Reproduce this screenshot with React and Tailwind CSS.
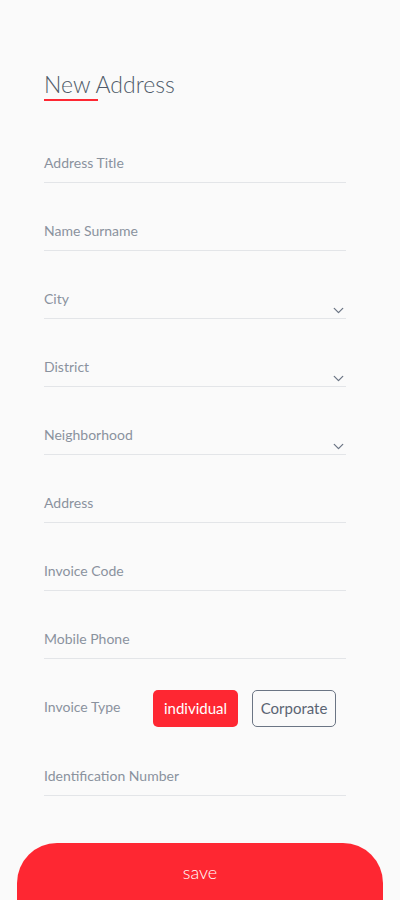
import React from 'react'
import { ChevronDown } from 'lucide-react'

const fields = [
    { label: 'Address Title' },
    { label: 'Name Surname' },
    { label: 'City', select: true },
    { label: 'District', select: true },
    { label: 'Neighborhood', select: true },
    { label: 'Address' },
    { label: 'Invoice Code' },
    { label: 'Mobile Phone' },
]

const Field = ({ label, select }) => (
    <div className='pt-[38px]'>
        <div className='flex justify-between items-end h-[20px]'>
            <span className='text-[14px] leading-[20px] text-[#8a929e]'>{label}</span>
            {select && <ChevronDown size={17} strokeWidth={1.8} className='text-[#6b7584] translate-y-[10px] mr-[-1px]' />}
        </div>
        <div className='mt-[9px] h-[1px] bg-[#e3e5e8]' />
    </div>
)

const App = () => {
    return (
        <div className='w-[400px] h-[900px] bg-[#fafafa] overflow-hidden flex flex-col' style={{ fontFamily: 'Lato, "Noto Sans", sans-serif' }}>
            <div className='pl-[44px] pr-[54px]'>
                <div className='pt-[70px]'>
                    <h1 className='text-[23px] leading-[28px] font-light text-[#4f5a69]'>New Address</h1>
                    <div className='mt-[1px] h-[2px] w-[54px] bg-[#fe2732]' />
                </div>
                <div className='mt-[14px]'>
                    {fields.map((f) => (
                        <Field key={f.label} {...f} />
                    ))}
                </div>
                <div className='mt-[31px] flex items-center h-[37px]'>
                    <span className='w-[109px] text-[14px] text-[#8a929e] -translate-y-[2px]'>Invoice Type</span>
                    <button className='w-[85px] h-[37px] rounded-[5px] bg-[#fe2732] text-white text-[15px]'>individual</button>
                    <button className='ml-[14px] w-[84px] h-[37px] rounded-[5px] border border-[#6b7584] text-[#5a6473] text-[15px]'>Corporate</button>
                </div>
                <div className='mt-[1px]'>
                    <Field label='Identification Number' />
                </div>
            </div>
            <div className='mt-[47px] mx-[17px] h-[57px] rounded-t-[40px] bg-[#fe2732] flex justify-center pt-[19px]'>
                <span className='text-white text-[18px] leading-[20px] font-light'>save</span>
            </div>
        </div>
    )
}

export default App
